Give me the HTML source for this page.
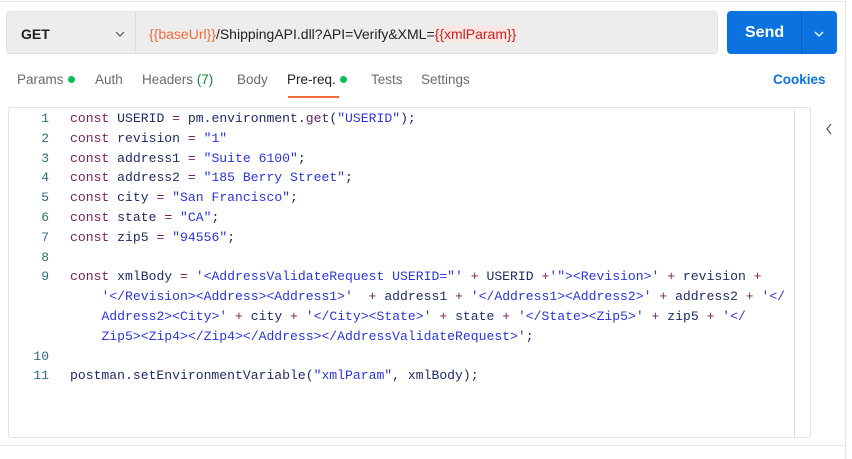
<!DOCTYPE html>
<html><head><meta charset="utf-8"><style>
*{margin:0;padding:0;box-sizing:border-box}
body{width:852px;height:459px;background:#fff;font-family:"Liberation Sans",sans-serif;position:relative;overflow:hidden}
.topline{position:absolute;left:0;top:1px;width:846px;height:1px;background:#e6e6e6}
.rline{position:absolute;left:845px;top:0;width:1px;height:459px;background:#e6e6e6}
.bar{position:absolute;left:6px;top:11px;width:712px;height:43px;background:#ededed;border:1px solid #e0e0e0;border-radius:4px}
.method{position:absolute;left:0;top:0;width:129px;height:41px;border-right:1px solid #dcdcdc;font-size:14px;font-weight:bold;color:#212121;padding:14px 0 0 14px}
.method .chev{position:absolute;left:107px;top:16px}
.url{position:absolute;left:142px;top:14px;font-size:14px;color:#212121;white-space:nowrap}
.v1{color:#f26b3a}
.v2{color:#c4221f;background:#fde5e4}
.send{position:absolute;left:727px;top:11px;width:110px;height:43px;background:#0b73e0;border-radius:4px;color:#fff}
.send span{position:absolute;left:18px;top:13px;font-size:16px;font-weight:bold}
.send .div{position:absolute;left:74px;top:0;width:1px;height:43px;background:#0a5fbd}
.send svg{position:absolute;left:86px;top:18px}
.tabs{position:absolute;top:72px;left:17px;font-size:13.5px;color:#6b6b6b;white-space:nowrap}
.tabs span{position:absolute;top:0}
.dot{display:inline-block;width:7px;height:7px;border-radius:50%;background:#0cbb52;margin-left:4px;vertical-align:1px}
.green{color:#0a8a3a}
.ul{position:absolute;left:288px;top:96px;width:51px;height:2px;background:#f26b3a}
.cookies{position:absolute;left:773px;top:72px;font-size:13.5px;color:#0b73e0;font-weight:bold}
.editor{position:absolute;left:8px;top:107px;width:803px;height:331px;border:1px solid #e2e2e2;border-radius:3px}
.sb{position:absolute;left:794px;top:110px;width:1px;height:327px;background:#dedede}
.code{position:absolute;left:0;top:109px;font-family:"Liberation Mono",monospace;font-size:13.1px;line-height:19.8px;color:#1f2a6b}
.txt{white-space:pre;padding-left:70px}
.ln{position:absolute;left:33px;width:16px;text-align:right;color:#2d7080;font-family:"Liberation Mono",monospace;font-size:13px}
.k{color:#7a1e5a}.s{color:#2a35e0}.p{color:#7a1e5a}.f{color:#5a1e6a}
.bot{position:absolute;left:0;top:445px;width:846px;height:1px;background:#e6e6e6}
</style></head><body>
<div class="topline"></div><div class="rline"></div>
<div class="bar">
 <div class="method">GET<svg class="chev" width="12" height="12" viewBox="0 0 12 12"><path d="M2 4l4 4 4-4" fill="none" stroke="#555" stroke-width="1.2"/></svg></div>
 <div class="url"><span class="v1">{{baseUrl}}</span>/ShippingAPI.dll?API=Verify&amp;XML=<span class="v2">{{xmlParam}}</span></div>
</div>
<div class="send"><span>Send</span><div class="div"></div><svg width="12" height="10" viewBox="0 0 12 10"><path d="M2 3l4 4 4-4" fill="none" stroke="#fff" stroke-width="1.3"/></svg></div>
<div class="tabs">
 <span style="left:0">Params<i class="dot"></i></span>
 <span style="left:78px">Auth</span>
 <span style="left:125px">Headers <b class="green" style="font-weight:normal">(7)</b></span>
 <span style="left:220px">Body</span>
 <span style="left:270px;color:#212121">Pre-req.<i class="dot"></i></span>
 <span style="left:354px">Tests</span>
 <span style="left:404px">Settings</span>
</div>
<div class="ul"></div>
<div class="cookies">Cookies</div>
<div class="editor"></div>
<div class="sb"></div>
<svg style="position:absolute;left:824px;top:122px" width="10" height="14" viewBox="0 0 10 14"><path d="M7 2L3 7l4 5" fill="none" stroke="#555" stroke-width="1.2"/></svg>
<div class="code">
<div class="ln" style="top:0">1</div><div class="ln" style="top:19.8px">2</div><div class="ln" style="top:39.6px">3</div><div class="ln" style="top:59.4px">4</div><div class="ln" style="top:79.2px">5</div><div class="ln" style="top:99px">6</div><div class="ln" style="top:118.8px">7</div><div class="ln" style="top:138.6px">8</div><div class="ln" style="top:158.4px">9</div><div class="ln" style="top:237.6px">10</div><div class="ln" style="top:257.4px">11</div>
<div class="txt"><span class="k">const</span> USERID <span class="p">=</span> pm.environment.<span class="f">get</span>(<span class="s">"USERID"</span>);
<span class="k">const</span> revision <span class="p">=</span> <span class="s">"1"</span>
<span class="k">const</span> address1 <span class="p">=</span> <span class="s">"Suite 6100"</span>;
<span class="k">const</span> address2 <span class="p">=</span> <span class="s">"185 Berry Street"</span>;
<span class="k">const</span> city <span class="p">=</span> <span class="s">"San Francisco"</span>;
<span class="k">const</span> state <span class="p">=</span> <span class="s">"CA"</span>;
<span class="k">const</span> zip5 <span class="p">=</span> <span class="s">"94556"</span>;

<span class="k">const</span> xmlBody <span class="p">=</span> <span class="s">'&lt;AddressValidateRequest USERID="'</span> <span class="p">+</span> USERID <span class="p">+</span><span class="s">'"&gt;&lt;Revision&gt;'</span> <span class="p">+</span> revision <span class="p">+</span>
    <span class="s">'&lt;/Revision&gt;&lt;Address&gt;&lt;Address1&gt;'</span>  <span class="p">+</span> address1 <span class="p">+</span> <span class="s">'&lt;/Address1&gt;&lt;Address2&gt;'</span> <span class="p">+</span> address2 <span class="p">+</span> <span class="s">'&lt;/</span>
    <span class="s">Address2&gt;&lt;City&gt;'</span> <span class="p">+</span> city <span class="p">+</span> <span class="s">'&lt;/City&gt;&lt;State&gt;'</span> <span class="p">+</span> state <span class="p">+</span> <span class="s">'&lt;/State&gt;&lt;Zip5&gt;'</span> <span class="p">+</span> zip5 <span class="p">+</span> <span class="s">'&lt;/</span>
    <span class="s">Zip5&gt;&lt;Zip4&gt;&lt;/Zip4&gt;&lt;/Address&gt;&lt;/AddressValidateRequest&gt;'</span>;

postman.setEnvironmentVariable(<span class="s">"xmlParam"</span>, xmlBody);</div>
</div>
<div class="bot"></div>
</body></html>
